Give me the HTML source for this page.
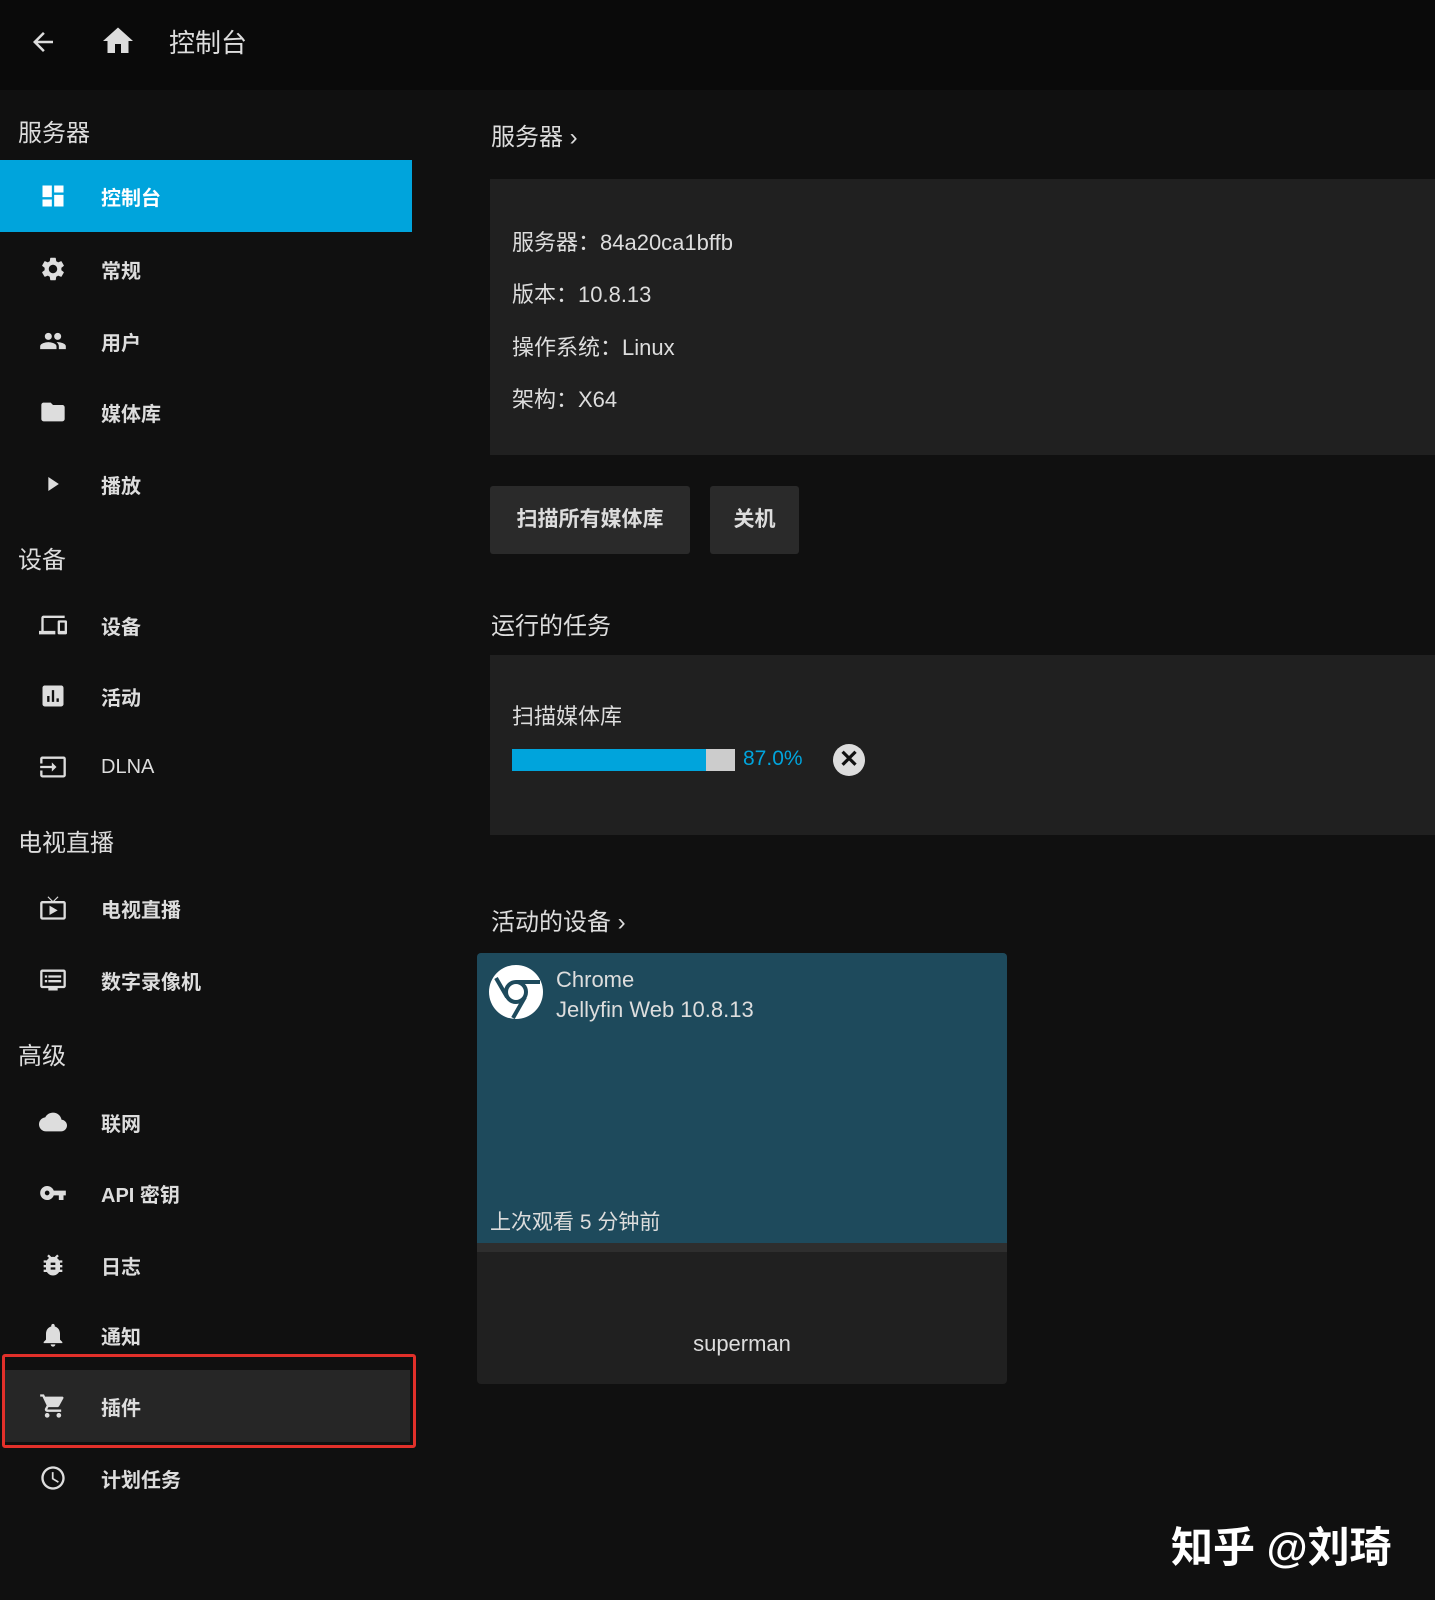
<!DOCTYPE html>
<html><head><meta charset="utf-8"><style>
*{margin:0;padding:0;box-sizing:border-box}
body{width:1435px;height:1600px;background:#101010;font-family:"Liberation Sans","Noto Sans CJK SC",sans-serif;color:#ddd;position:relative;overflow:hidden}
.a{position:absolute;white-space:nowrap}
.hdr{left:0;top:0;width:1435px;height:90px;background:#0a0a0a}
.sh{font-size:24px;left:18px;color:#ddd}
.it{left:0;width:412px;height:72px}
.it svg{position:absolute;left:39px;top:22px;width:28px;height:28px;fill:#ddd}
.it span{position:absolute;left:101px;top:22px;font-size:20px;font-weight:bold;color:#ddd}
.card{background:#202020}
.mt{font-size:22px;left:512px;color:#ddd}
.btn{background:#2a2a2a;border-radius:3px;font-size:21px;font-weight:bold;text-align:center;line-height:68px;color:#ddd}
</style></head><body>
<div class="a hdr"></div>
<svg class="a" style="left:28px;top:27px" width="30" height="30" viewBox="0 0 24 24" fill="#ddd"><path d="M20 11H7.83l5.59-5.59L12 4l-8 8 8 8 1.41-1.41L7.83 13H20v-2z"/></svg>
<svg class="a" style="left:100px;top:23px" width="36" height="36" viewBox="0 0 24 24" fill="#ddd"><path d="M10 20v-6h4v6h5v-8h3L12 3 2 12h3v8z"/></svg>
<div class="a" style="left:169px;top:23px;font-size:26px;color:#ddd">控制台</div>

<div class="a sh" style="top:113px">服务器</div>
<div class="a it" style="top:160px;background:#00a4dc">
<svg viewBox="0 0 24 24" style="fill:#fff"><path d="M3 13h8V3H3v10zm0 8h8v-6H3v6zm10 0h8V11h-8v10zm0-18v6h8V3h-8z"/></svg><span style="color:#fff">控制台</span></div>
<div class="a it" style="top:233px"><svg viewBox="0 0 24 24"><path d="M19.14 12.94c.04-.3.06-.61.06-.94 0-.32-.02-.64-.07-.94l2.030-1.58a.49.49 0 00.12-.61l-1.92-3.32a.488.488 0 00-.59-.22l-2.39.96c-.5-.38-1.03-.7-1.62-.94l-.36-2.54a.484.484 0 00-.48-.41h-3.84c-.24 0-.43.17-.47.41l-.36 2.54c-.59.24-1.13.57-1.62.94l-2.39-.96c-.22-.08-.47 0-.59.22L2.74 8.870c-.12.21-.08.47.12.61l2.03 1.58c-.05.3-.09.63-.09.94s.02.64.07.94l-2.03 1.58a.49.49 0 00-.12.61l1.92 3.32c.12.22.37.29.59.22l2.39-.96c.5.38 1.03.7 1.62.94l.36 2.54c.05.24.24.41.48.41h3.84c.24 0 .44-.17.47-.41l.36-2.54c.59-.24 1.13-.56 1.62-.94l2.39.96c.22.08.47 0 .59-.22l1.92-3.32c.12-.22.07-.47-.12-.61l-2.01-1.58zM12 15.6c-1.98 0-3.6-1.62-3.6-3.6s1.62-3.6 3.6-3.6 3.6 1.62 3.6 3.6-1.62 3.6-3.6 3.6z"/></svg><span>常规</span></div>
<div class="a it" style="top:305px"><svg viewBox="0 0 24 24"><path d="M16 11c1.66 0 2.99-1.34 2.99-3S17.66 5 16 5c-1.66 0-3 1.34-3 3s1.34 3 3 3zm-8 0c1.66 0 2.99-1.34 2.99-3S9.66 5 8 5C6.34 5 5 6.34 5 8s1.34 3 3 3zm0 2c-2.33 0-7 1.17-7 3.5V19h14v-2.5c0-2.33-4.67-3.5-7-3.5zm8 0c-.29 0-.62.02-.97.05 1.16.84 1.97 1.97 1.97 3.45V19h6v-2.5c0-2.330-4.67-3.5-7-3.5z"/></svg><span>用户</span></div>
<div class="a it" style="top:376px"><svg viewBox="0 0 24 24"><path d="M10 4H4c-1.1 0-2 .9-2 2v12c0 1.1.9 2 2 2h16c1.1 0 2-.9 2-2V8c0-1.1-.9-2-2-2h-8l-2-2z"/></svg><span>媒体库</span></div>
<div class="a it" style="top:448px"><svg viewBox="0 0 24 24"><path d="M8 6v12l9-6z"/></svg><span>播放</span></div>

<div class="a sh" style="top:540px">设备</div>
<div class="a it" style="top:589px"><svg viewBox="0 0 24 24"><path d="M4 6h18V4H4c-1.1 0-2 .9-2 2v11H0v3h14v-3H4V6zm19 2h-6c-.55 0-1 .45-1 1v10c0 .55.45 1 1 1h6c.55 0 1-.45 1-1V9c0-.55-.45-1-1-1zm-1 9h-4v-7h4v7z"/></svg><span>设备</span></div>
<div class="a it" style="top:660px"><svg viewBox="0 0 24 24"><path d="M19 3H5c-1.1 0-2 .9-2 2v14c0 1.1.9 2 2 2h14c1.1 0 2-.9 2-2V5c0-1.1-.9-2-2-2zM9 17H7v-5h2v5zm4 0h-2V7h2v10zm4 0h-2v-3h2v3z"/></svg><span>活动</span></div>
<div class="a it" style="top:731px"><svg viewBox="0 0 24 24"><path d="M21 3.01H3c-1.1 0-2 .9-2 2V9h2V4.990h18v14.03H3V15H1v4.01c0 1.1.9 1.98 2 1.98h18c1.1 0 2-.88 2-1.98v-14c0-1.11-.9-2-2-2zM11 16l4-4-4-4v3H1v2h10v3z"/></svg><span style="font-weight:normal;top:25px">DLNA</span></div>

<div class="a sh" style="top:823px">电视直播</div>
<div class="a it" style="top:872px"><svg viewBox="0 0 24 24"><path d="M21 6h-7.59l3.29-3.29L16 2l-4 4-4-4-.71.71L10.59 6H3c-1.1 0-2 .89-2 2v12c0 1.1.9 2 2 2h18c1.1 0 2-.9 2-2V8c0-1.11-.9-2-2-2zm0 14H3V8h18v12zM9 10v8l7-4z"/></svg><span>电视直播</span></div>
<div class="a it" style="top:944px"><svg viewBox="0 0 24 24"><path d="M21 3H3c-1.1 0-2 .9-2 2v12c0 1.1.9 2 2 2h5v2h8v-2h5c1.1 0 1.99-.9 1.99-2L23 5c0-1.1-.9-2-2-2zm0 14H3V5h18v12zm-2-9H8v2h11V8zm0 4H8v2h11v-2zM7 8H5v2h2V8zm0 4H5v2h2v-2z"/></svg><span>数字录像机</span></div>

<div class="a sh" style="top:1036px">高级</div>
<div class="a it" style="top:1086px"><svg viewBox="0 0 24 24"><path d="M19.35 10.04C18.67 6.59 15.64 4 12 4 9.11 4 6.6 5.64 5.35 8.04 2.34 8.36 0 10.91 0 14c0 3.31 2.69 6 6 6h13c2.76 0 5-2.24 5-5 0-2.64-2.05-4.78-4.650-4.96z"/></svg><span>联网</span></div>
<div class="a it" style="top:1157px"><svg viewBox="0 0 24 24"><path d="M12.65 10C11.83 7.67 9.61 6 7 6c-3.31 0-6 2.690-6 6s2.69 6 6 6c2.61 0 4.83-1.67 5.65-4H17v4h4v-4h2v-4H12.65zM7 14c-1.1 0-2-.9-2-2s.9-2 2-2 2 .9 2 2-.9 2-2 2z"/></svg><span>API 密钥</span></div>
<div class="a it" style="top:1229px"><svg viewBox="0 0 24 24"><path d="M20 8h-2.81c-.45-.78-1.07-1.45-1.82-1.96L17 4.41 15.59 3l-2.17 2.17C12.96 5.06 12.49 5 12 5c-.49 0-.96.06-1.41.17L8.41 3 7 4.41l1.62 1.63C7.88 6.55 7.26 7.22 6.81 8H4v2h2.09c-.05.33-.09.66-.09 1v1H4v2h2v1c0 .34.04.67.09 1H4v2h2.81c1.04 1.79 2.97 3 5.19 3s4.15-1.21 5.19-3H20v-2h-2.09c.05-.33.09-.66.09-1v-1h2v-2h-2v-1c0-.34-.04-.67-.09-1H20V8zm-6 8h-4v-2h4v2zm0-4h-4v-2h4v2z"/></svg><span>日志</span></div>
<div class="a it" style="top:1299px"><svg viewBox="0 0 24 24"><path d="M12 22c1.1 0 2-.9 2-2h-4c0 1.1.89 2 2 2zm6-6v-5c0-3.07-1.64-5.64-4.5-6.32V4c0-.83-.67-1.5-1.5-1.5s-1.5.67-1.5 1.5v.68C7.63 5.36 6 7.92 6 11v5l-2 2v1h16v-1l-2-2z"/></svg><span>通知</span></div>
<div class="a it" style="top:1370px;left:5px;width:405px;background:#262626"></div>
<div class="a it" style="top:1370px"><svg viewBox="0 0 24 24"><path d="M7 18c-1.1 0-1.99.9-1.99 2S5.9 22 7 22s2-.9 2-2-.9-2-2-2zM1 2v2h2l3.6 7.59-1.35 2.45c-.16.28-.25.61-.25.96 0 1.1.9 2 2 2h12v-2H7.42c-.14 0-.25-.11-.25-.25l.03-.12.9-1.63h7.45c.75 0 1.41-.41 1.75-1.03l3.58-6.49A1.003 1.003 0 0020 4H5.21l-.94-2H1zm16 16c-1.1 0-1.99.9-1.99 2s.89 2 1.99 2 2-.9 2-2-.9-2-2-2z"/></svg><span>插件</span></div>
<div class="a" style="left:2px;top:1354px;width:414px;height:94px;border:3px solid #e2302a;border-radius:3px"></div>
<div class="a it" style="top:1442px"><svg viewBox="0 0 24 24"><path d="M11.99 2C6.47 2 2 6.48 2 12s4.47 10 9.99 10C17.52 22 22 17.52 22 12S17.52 2 11.99 2zM12 20c-4.42 0-8-3.58-8-8s3.58-8 8-8 8 3.58 8 8-3.58 8-8 8zm.5-13H11v6l5.25 3.15.75-1.23-4.5-2.67z"/></svg><span>计划任务</span></div>

<div class="a" style="left:491px;top:117px;font-size:24px">服务器 ›</div>
<div class="a card" style="left:490px;top:179px;width:945px;height:276px"></div>
<div class="a mt" style="top:225px">服务器：84a20ca1bffb</div>
<div class="a mt" style="top:277px">版本：10.8.13</div>
<div class="a mt" style="top:330px">操作系统：Linux</div>
<div class="a mt" style="top:382px">架构：X64</div>
<div class="a btn" style="left:490px;top:486px;width:200px;height:68px">扫描所有媒体库</div>
<div class="a btn" style="left:710px;top:486px;width:89px;height:68px">关机</div>
<div class="a" style="left:491px;top:606px;font-size:24px">运行的任务</div>
<div class="a card" style="left:490px;top:655px;width:945px;height:180px"></div>
<div class="a mt" style="top:699px">扫描媒体库</div>
<div class="a" style="left:512px;top:749px;width:223px;height:22px;background:#ccc"></div>
<div class="a" style="left:512px;top:749px;width:194px;height:22px;background:#00a4dc"></div>
<div class="a" style="left:743px;top:747px;font-size:21px;color:#00a4dc">87.0%</div>
<div class="a" style="left:833px;top:744px;width:32px;height:32px;border-radius:50%;background:#ddd;color:#111;font-size:24px;font-weight:bold;text-align:center;line-height:32px">✕</div>

<div class="a" style="left:491px;top:902px;font-size:24px">活动的设备 ›</div>
<div class="a" style="left:477px;top:953px;width:530px;height:431px;background:#202020;border-radius:4px;overflow:hidden">
<div style="position:absolute;left:0;top:0;width:530px;height:290px;background:#1e4a5c"></div>
<div style="position:absolute;left:0;top:290px;width:530px;height:9px;background:#2e2e2e"></div>
</div>
<svg class="a" style="left:488px;top:964px" width="56" height="56" viewBox="0 0 56 56"><circle cx="28" cy="28" r="27" fill="#fff"/><circle cx="28" cy="28" r="10" fill="none" stroke="#1e4a5c" stroke-width="4"/><path d="M28 18 L52 18 M19 33 L8 14 M37 33 L25 54" stroke="#1e4a5c" stroke-width="4"/></svg>
<div class="a" style="left:556px;top:967px;font-size:22px;color:#ddd">Chrome</div>
<div class="a" style="left:556px;top:997px;font-size:22px;color:#ddd">Jellyfin Web 10.8.13</div>
<div class="a" style="left:490px;top:1206px;font-size:21px;color:#ddd">上次观看 5 分钟前</div>
<div class="a" style="left:477px;top:1331px;width:530px;text-align:center;font-size:22px;color:#ddd">superman</div>

<div class="a" style="left:1171px;top:1514px;font-size:42px;font-weight:bold;color:#fff">知乎 @刘琦</div>
</body></html>
